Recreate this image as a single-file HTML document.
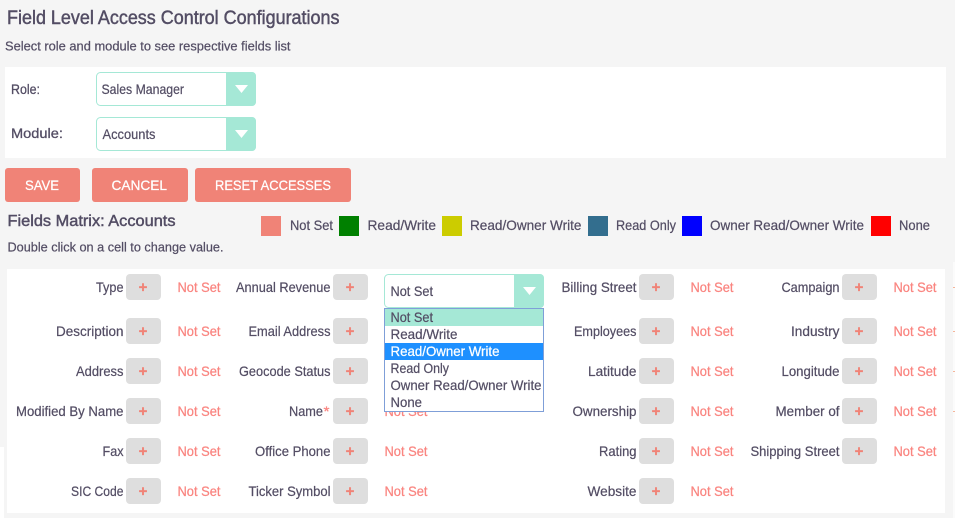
<!DOCTYPE html>
<html>
<head>
<meta charset="utf-8">
<title>Field Level Access Control Configurations</title>
<style>
html,body{margin:0;padding:0;width:955px;height:518px;overflow:hidden;background:#f5f5f5}
svg{display:block}
text{font-family:"Liberation Sans",sans-serif;font-size:14px;fill:#534d64;stroke:#534d64;stroke-width:.22px}
.b{stroke-width:.45px}
.n{fill:#fa8580;stroke:#fa8580;stroke-width:.25px}
.w{fill:#fff;stroke:#fff;stroke-width:.25px}
.f{fill:#f08377}
.p{fill:#dedede}
.m{fill:#a5e8d6}
.tw{fill:#fff}
.plus{fill:#f08377;stroke:#f08377;stroke-width:.35px;font-weight:bold;font-size:15px;text-anchor:middle}
</style>
</head>
<body>
<svg width="955" height="518" viewBox="0 0 955 518" xmlns="http://www.w3.org/2000/svg">
<rect x="0" y="447" width="4" height="71" fill="#fff"/>
<rect x="953" y="262" width="2" height="256" fill="#fbfbfb"/>
<rect x="953" y="287" width="2" height="1" fill="#f5b59a"/>
<rect x="953" y="331" width="2" height="1" fill="#f5b59a"/>
<rect x="953" y="371" width="2" height="1" fill="#f5b59a"/>
<rect x="953" y="411" width="2" height="1" fill="#f5b59a"/>

<text x="7" y="24" style="font-size:19px" class="b" textLength="332.5" lengthAdjust="spacingAndGlyphs">Field Level Access Control Configurations</text>
<text x="5" y="50.5" style="font-size:13px" textLength="285.5" lengthAdjust="spacingAndGlyphs">Select role and module to see respective fields list</text>

<rect x="5" y="67" width="941" height="91" fill="#fff"/>
<text x="11" y="94" class="b" style="stroke-width:.3px" textLength="29" lengthAdjust="spacingAndGlyphs">Role:</text>
<text x="11" y="138" class="b" style="stroke-width:.3px" textLength="52" lengthAdjust="spacingAndGlyphs">Module:</text>

<rect x="96.500" y="72.500" width="159" height="33" rx="4" fill="#fff" stroke="#a5e8d6"/>
<path d="M226 72h26a4 4 0 0 1 4 4v26a4 4 0 0 1-4 4h-26z" class="m"/>
<path d="M235 85h13l-6.500 8z" class="tw"/>
<text x="101.500" y="94" textLength="82.500" lengthAdjust="spacingAndGlyphs">Sales Manager</text>

<rect x="96.500" y="117.500" width="159" height="33" rx="4" fill="#fff" stroke="#a5e8d6"/>
<path d="M226 117h26a4 4 0 0 1 4 4v26a4 4 0 0 1-4 4h-26z" class="m"/>
<path d="M235 130h13l-6.500 8z" class="tw"/>
<text x="102.500" y="139" textLength="53" lengthAdjust="spacingAndGlyphs">Accounts</text>

<rect x="5" y="168" width="75" height="34" rx="3" class="f"/>
<rect x="92" y="168" width="96" height="34" rx="3" class="f"/>
<rect x="195" y="168" width="156" height="34" rx="3" class="f"/>
<text x="25" y="190" class="w" textLength="34" lengthAdjust="spacingAndGlyphs">SAVE</text>
<text x="111.500" y="190" class="w" textLength="55.500" lengthAdjust="spacingAndGlyphs">CANCEL</text>
<text x="215" y="190" class="w" textLength="116" lengthAdjust="spacingAndGlyphs">RESET ACCESSES</text>

<text x="7.500" y="226" style="font-size:15.500px" class="b" textLength="168" lengthAdjust="spacingAndGlyphs">Fields Matrix: Accounts</text>
<text x="7.500" y="251.500" style="font-size:13px" textLength="216" lengthAdjust="spacingAndGlyphs">Double click on a cell to change value.</text>

<rect x="261" y="216" width="20" height="20" fill="#f08377"/>
<rect x="339" y="216" width="20" height="20" fill="#008000"/>
<rect x="442" y="216" width="20" height="20" fill="#cccc00"/>
<rect x="588" y="216" width="20" height="20" fill="#336e8e"/>
<rect x="682" y="216" width="20" height="20" fill="#0000ff"/>
<rect x="871" y="216" width="20" height="20" fill="#ff0000"/>
<text x="290" y="230" textLength="43" lengthAdjust="spacingAndGlyphs">Not Set</text>
<text x="367.500" y="230" textLength="68.500" lengthAdjust="spacingAndGlyphs">Read/Write</text>
<text x="470" y="230" textLength="111.500" lengthAdjust="spacingAndGlyphs">Read/Owner Write</text>
<text x="616" y="230" textLength="60" lengthAdjust="spacingAndGlyphs">Read Only</text>
<text x="710" y="230" textLength="154" lengthAdjust="spacingAndGlyphs">Owner Read/Owner Write</text>
<text x="899" y="230" textLength="31" lengthAdjust="spacingAndGlyphs">None</text>

<rect x="7" y="269" width="938" height="244" fill="#fff"/>

<!-- Row 1 -->
<rect x="126" y="274" width="35" height="26" rx="4" class="p"/><text x="143" y="292" class="plus">+</text>
<rect x="333" y="274" width="35" height="26" rx="4" class="p"/><text x="350" y="292" class="plus">+</text>
<rect x="639" y="274" width="35" height="26" rx="4" class="p"/><text x="656" y="292" class="plus">+</text>
<rect x="842" y="274" width="35" height="26" rx="4" class="p"/><text x="859" y="292" class="plus">+</text>
<text x="96" y="292" textLength="27.500" lengthAdjust="spacingAndGlyphs">Type</text>
<text x="236" y="292" textLength="94.500" lengthAdjust="spacingAndGlyphs">Annual Revenue</text>
<text x="561.500" y="292" textLength="75" lengthAdjust="spacingAndGlyphs">Billing Street</text>
<text x="781.500" y="292" textLength="58" lengthAdjust="spacingAndGlyphs">Campaign</text>
<text x="177.500" y="292" class="n" textLength="43" lengthAdjust="spacingAndGlyphs">Not Set</text>
<text x="690.500" y="292" class="n" textLength="43" lengthAdjust="spacingAndGlyphs">Not Set</text>
<text x="893.500" y="292" class="n" textLength="43" lengthAdjust="spacingAndGlyphs">Not Set</text>

<!-- Row 2 -->
<rect x="126" y="318" width="35" height="26" rx="4" class="p"/><text x="143" y="336" class="plus">+</text>
<rect x="333" y="318" width="35" height="26" rx="4" class="p"/><text x="350" y="336" class="plus">+</text>
<rect x="639" y="318" width="35" height="26" rx="4" class="p"/><text x="656" y="336" class="plus">+</text>
<rect x="842" y="318" width="35" height="26" rx="4" class="p"/><text x="859" y="336" class="plus">+</text>
<text x="56" y="336" textLength="67.500" lengthAdjust="spacingAndGlyphs">Description</text>
<text x="248.500" y="336" textLength="82" lengthAdjust="spacingAndGlyphs">Email Address</text>
<text x="574" y="336" textLength="62.500" lengthAdjust="spacingAndGlyphs">Employees</text>
<text x="791" y="336" textLength="48.500" lengthAdjust="spacingAndGlyphs">Industry</text>
<text x="177.500" y="336" class="n" textLength="43" lengthAdjust="spacingAndGlyphs">Not Set</text>
<text x="690.500" y="336" class="n" textLength="43" lengthAdjust="spacingAndGlyphs">Not Set</text>
<text x="893.500" y="336" class="n" textLength="43" lengthAdjust="spacingAndGlyphs">Not Set</text>

<!-- Row 3 -->
<rect x="126" y="358" width="35" height="26" rx="4" class="p"/><text x="143" y="376" class="plus">+</text>
<rect x="333" y="358" width="35" height="26" rx="4" class="p"/><text x="350" y="376" class="plus">+</text>
<rect x="639" y="358" width="35" height="26" rx="4" class="p"/><text x="656" y="376" class="plus">+</text>
<rect x="842" y="358" width="35" height="26" rx="4" class="p"/><text x="859" y="376" class="plus">+</text>
<text x="76" y="376" textLength="47.500" lengthAdjust="spacingAndGlyphs">Address</text>
<text x="239" y="376" textLength="91.500" lengthAdjust="spacingAndGlyphs">Geocode Status</text>
<text x="588" y="376" textLength="48.500" lengthAdjust="spacingAndGlyphs">Latitude</text>
<text x="781.500" y="376" textLength="58" lengthAdjust="spacingAndGlyphs">Longitude</text>
<text x="177.500" y="376" class="n" textLength="43" lengthAdjust="spacingAndGlyphs">Not Set</text>
<text x="690.500" y="376" class="n" textLength="43" lengthAdjust="spacingAndGlyphs">Not Set</text>
<text x="893.500" y="376" class="n" textLength="43" lengthAdjust="spacingAndGlyphs">Not Set</text>

<!-- Row 4 -->
<rect x="126" y="398" width="35" height="26" rx="4" class="p"/><text x="143" y="416" class="plus">+</text>
<rect x="333" y="398" width="35" height="26" rx="4" class="p"/><text x="350" y="416" class="plus">+</text>
<rect x="639" y="398" width="35" height="26" rx="4" class="p"/><text x="656" y="416" class="plus">+</text>
<rect x="842" y="398" width="35" height="26" rx="4" class="p"/><text x="859" y="416" class="plus">+</text>
<text x="16" y="416" textLength="107.500" lengthAdjust="spacingAndGlyphs">Modified By Name</text>
<text x="289" y="416" textLength="34" lengthAdjust="spacingAndGlyphs">Name</text>
<text x="323.500" y="416" class="n" textLength="6" lengthAdjust="spacingAndGlyphs">*</text>
<text x="572.500" y="416" textLength="64" lengthAdjust="spacingAndGlyphs">Ownership</text>
<text x="775.500" y="416" textLength="64" lengthAdjust="spacingAndGlyphs">Member of</text>
<text x="177.500" y="416" class="n" textLength="43" lengthAdjust="spacingAndGlyphs">Not Set</text>
<text x="384.500" y="416" class="n" textLength="43" lengthAdjust="spacingAndGlyphs">Not Set</text>
<text x="690.500" y="416" class="n" textLength="43" lengthAdjust="spacingAndGlyphs">Not Set</text>
<text x="893.500" y="416" class="n" textLength="43" lengthAdjust="spacingAndGlyphs">Not Set</text>

<!-- Row 5 -->
<rect x="126" y="438" width="35" height="26" rx="4" class="p"/><text x="143" y="456" class="plus">+</text>
<rect x="333" y="438" width="35" height="26" rx="4" class="p"/><text x="350" y="456" class="plus">+</text>
<rect x="639" y="438" width="35" height="26" rx="4" class="p"/><text x="656" y="456" class="plus">+</text>
<rect x="842" y="438" width="35" height="26" rx="4" class="p"/><text x="859" y="456" class="plus">+</text>
<text x="102.500" y="456" textLength="21" lengthAdjust="spacingAndGlyphs">Fax</text>
<text x="255" y="456" textLength="75.500" lengthAdjust="spacingAndGlyphs">Office Phone</text>
<text x="599" y="456" textLength="37.500" lengthAdjust="spacingAndGlyphs">Rating</text>
<text x="750.500" y="456" textLength="89" lengthAdjust="spacingAndGlyphs">Shipping Street</text>
<text x="177.500" y="456" class="n" textLength="43" lengthAdjust="spacingAndGlyphs">Not Set</text>
<text x="384.500" y="456" class="n" textLength="43" lengthAdjust="spacingAndGlyphs">Not Set</text>
<text x="690.500" y="456" class="n" textLength="43" lengthAdjust="spacingAndGlyphs">Not Set</text>
<text x="893.500" y="456" class="n" textLength="43" lengthAdjust="spacingAndGlyphs">Not Set</text>

<!-- Row 6 -->
<rect x="126" y="478" width="35" height="26" rx="4" class="p"/><text x="143" y="496" class="plus">+</text>
<rect x="333" y="478" width="35" height="26" rx="4" class="p"/><text x="350" y="496" class="plus">+</text>
<rect x="639" y="478" width="35" height="26" rx="4" class="p"/><text x="656" y="496" class="plus">+</text>
<text x="71" y="496" textLength="52.500" lengthAdjust="spacingAndGlyphs">SIC Code</text>
<text x="248.500" y="496" textLength="82" lengthAdjust="spacingAndGlyphs">Ticker Symbol</text>
<text x="587.500" y="496" textLength="49" lengthAdjust="spacingAndGlyphs">Website</text>
<text x="177.500" y="496" class="n" textLength="43" lengthAdjust="spacingAndGlyphs">Not Set</text>
<text x="384.500" y="496" class="n" textLength="43" lengthAdjust="spacingAndGlyphs">Not Set</text>
<text x="690.500" y="496" class="n" textLength="43" lengthAdjust="spacingAndGlyphs">Not Set</text>

<!-- Open dropdown -->
<rect x="384.500" y="274.500" width="159" height="33" rx="4" fill="#fff" stroke="#a5e8d6"/>
<path d="M514 274h26a4 4 0 0 1 4 4v26a4 4 0 0 1-4 4h-26z" class="m"/>
<path d="M523 287h13l-6.500 8z" class="tw"/>
<text x="390.500" y="296" textLength="42.500" lengthAdjust="spacingAndGlyphs">Not Set</text>

<rect x="384.500" y="308.500" width="159" height="103" fill="#fff" stroke="#7f9fd8"/>
<rect x="385" y="309" width="158" height="17" class="m"/>
<rect x="385" y="343" width="158" height="17" fill="#1e90ff"/>
<text x="390.500" y="322" textLength="42.500" lengthAdjust="spacingAndGlyphs">Not Set</text>
<text x="390.500" y="339" textLength="67" lengthAdjust="spacingAndGlyphs">Read/Write</text>
<text x="390.500" y="356" class="w" textLength="109" lengthAdjust="spacingAndGlyphs">Read/Owner Write</text>
<text x="390.500" y="373" textLength="58.500" lengthAdjust="spacingAndGlyphs">Read Only</text>
<text x="390.500" y="390" textLength="151" lengthAdjust="spacingAndGlyphs">Owner Read/Owner Write</text>
<text x="390.500" y="407" textLength="31.500" lengthAdjust="spacingAndGlyphs">None</text>
</svg>
</body>
</html>
